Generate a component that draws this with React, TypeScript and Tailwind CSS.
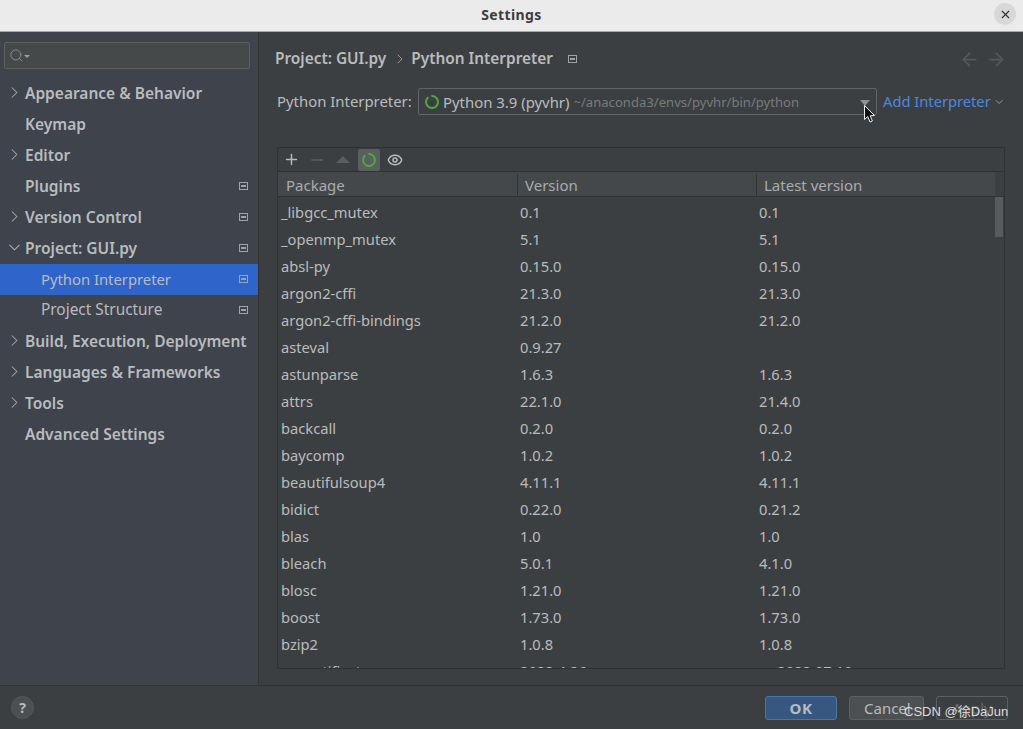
import { ChevronDown, ChevronRight, ArrowLeft, ArrowRight, Plus, Minus, Eye, X, Search } from "lucide-react";

const FONT = "font-['Noto_Sans','Open_Sans',sans-serif]";

const NAV = [
  { label: "Appearance & Behavior", arrow: "right", bold: true },
  { label: "Keymap", bold: true },
  { label: "Editor", arrow: "right", bold: true },
  { label: "Plugins", bold: true, badge: true },
  { label: "Version Control", arrow: "right", bold: true, badge: true },
  { label: "Project: GUI.py", arrow: "down", bold: true, badge: true },
  { label: "Python Interpreter", badge: true, child: true, selected: true },
  { label: "Project Structure", badge: true, child: true },
  { label: "Build, Execution, Deployment", arrow: "right", bold: true },
  { label: "Languages & Frameworks", arrow: "right", bold: true },
  { label: "Tools", arrow: "right", bold: true },
  { label: "Advanced Settings", bold: true },
];

const PACKAGES = [
  ["_libgcc_mutex", "0.1", "0.1"],
  ["_openmp_mutex", "5.1", "5.1"],
  ["absl-py", "0.15.0", "0.15.0"],
  ["argon2-cffi", "21.3.0", "21.3.0"],
  ["argon2-cffi-bindings", "21.2.0", "21.2.0"],
  ["asteval", "0.9.27", ""],
  ["astunparse", "1.6.3", "1.6.3"],
  ["attrs", "22.1.0", "21.4.0"],
  ["backcall", "0.2.0", "0.2.0"],
  ["baycomp", "1.0.2", "1.0.2"],
  ["beautifulsoup4", "4.11.1", "4.11.1"],
  ["bidict", "0.22.0", "0.21.2"],
  ["blas", "1.0", "1.0"],
  ["bleach", "5.0.1", "4.1.0"],
  ["blosc", "1.21.0", "1.21.0"],
  ["boost", "1.73.0", "1.73.0"],
  ["bzip2", "1.0.8", "1.0.8"],
  ["ca-certificates", "2022.4.26", "▲ 2022.07.19"],
];

function ProjectBadge({ className = "" }: { className?: string }) {
  return (
    <svg width="9" height="8" viewBox="0 0 9 8" className={className}>
      <rect x="0.5" y="0.5" width="8" height="7" fill="none" stroke="#9ea3a8" />
      <rect x="2" y="3" width="5" height="2" fill="#9ea3a8" />
    </svg>
  );
}

function Spinner({ size = 16 }: { size?: number }) {
  return (
    <svg width={size} height={size} viewBox="0 0 16 16">
      <circle cx="8" cy="8" r="6" fill="none" stroke="#4fa83d" strokeWidth="2" strokeDasharray="30 3" transform="rotate(-60 8 8)" />
    </svg>
  );
}

function NavRow({ item }: { item: (typeof NAV)[number] }) {
  return (
    <div className={`relative flex h-[31px] items-center pr-[10px] ${item.child ? "pl-[41px]" : "pl-[25px]"} ${item.selected ? "bg-[#2f65ca]" : ""}`}>
      {item.arrow === "right" && <ChevronRight size={19} strokeWidth={1.3} className="absolute left-[5px] top-[5px] text-[#a9adb1]" />}
      {item.arrow === "down" && <ChevronDown size={19} strokeWidth={1.3} className="absolute left-[5px] top-[5px] text-[#a9adb1]" />}
      <span className={`relative top-[-1px] whitespace-nowrap leading-[22px] text-[#b9bcbe] ${item.bold ? "text-[15.5px] font-semibold" : item.selected ? "text-[14.8px]" : "text-[15.4px]"}`}>{item.label}</span>
      {item.badge && <ProjectBadge className="relative top-[-1px] ml-auto" />}
    </div>
  );
}

export default function App() {
  return (
    <div className={`${FONT} flex h-[729px] w-[1023px] flex-col overflow-hidden bg-[#3c3f41] relative`}>
      {/* Title bar */}
      <div className="relative flex h-[32px] shrink-0 items-center justify-center border-b border-[#a8a8a8] bg-[#ebebeb]">
        <span className="mb-[3px] text-[14px] font-bold tracking-[0.4px] text-[#3d3d3d]">Settings</span>
        <div className="absolute right-[7px] top-[3px] flex h-[22px] w-[22px] items-center justify-center rounded-full bg-[#d8d8d8]">
          <X size={13} strokeWidth={2} className="text-[#2e2e2e]" />
        </div>
      </div>

      <div className="flex min-h-0 flex-1">
        {/* Sidebar */}
        <div className="flex w-[259px] shrink-0 flex-col border-r border-[#323232] bg-[#3e434c]">
          <div className="mx-[4px] mt-[10px] flex h-[27px] w-[246px] items-center rounded-[2px] border border-[#5e6060] bg-[#45494a] pl-[4px]">
            <Search size={15} strokeWidth={1.2} className="text-[#9a9da0]" />
            <span className="mt-[2px] h-0 w-0 border-x-[3px] border-t-[3px] border-x-transparent border-t-[#9a9da0]" />
          </div>
          <div className="mt-[9px] flex flex-col">
            {NAV.map((item) => (
              <NavRow key={item.label} item={item} />
            ))}
          </div>
        </div>

        {/* Main panel */}
        <div className="flex min-w-0 flex-1 flex-col pl-[16px] pr-[18px]">
          <div className="mt-[16px] flex h-[22px] items-center">
            <span className="whitespace-nowrap text-[15.4px] font-semibold text-[#b9bcbe]">Project: GUI.py</span>
            <ChevronRight size={16} strokeWidth={1.2} className="ml-[6px] text-[#a9adb1]" />
            <span className="ml-[3px] whitespace-nowrap text-[15.4px] font-semibold text-[#b9bcbe]">Python Interpreter</span>
            <ProjectBadge className="ml-[15px]" />
            <div className="ml-auto mr-[-2px] flex items-center gap-[6px] text-[#55585a]">
              <ArrowLeft size={21} strokeWidth={2} />
              <ArrowRight size={21} strokeWidth={2} />
            </div>
          </div>

          <div className="mt-[18px] flex h-[27px] items-center pl-[2px]">
            <span className="w-[141px] shrink-0 whitespace-nowrap text-[14.9px] text-[#b9bcbe]">Python Interpreter:</span>
            <div className="relative flex h-[27px] w-[459px] shrink-0 items-center rounded-[2px] border border-[#646464] pl-[5px] pt-[1px]">
              <Spinner size={16} />
              <span className="ml-[3px] whitespace-nowrap text-[14.9px] text-[#b9bcbe]">Python 3.9 (pyvhr)</span>
              <span className="relative top-[1px] ml-[4px] whitespace-nowrap text-[13.1px] text-[#787b7d]">~/anaconda3/envs/pyvhr/bin/python</span>
              <span className="absolute right-[6px] top-[11px] h-0 w-0 border-x-[5px] border-t-[6px] border-x-transparent border-t-[#8f9294]" />
            </div>
            <span className="ml-[6px] whitespace-nowrap text-[14.7px] text-[#4a88e0]">Add Interpreter</span>
            <ChevronDown size={16} strokeWidth={1.6} className="ml-[2px] text-[#a9adb1]" />
          </div>

          {/* Package table */}
          <div className="mb-[16px] ml-[2px] mt-[32px] flex min-h-0 w-[728px] flex-1 flex-col overflow-hidden border border-[#2f3133]">
            <div className="flex h-[24px] shrink-0 items-center border-b border-[#323232] pl-[5px]">
              <div className="flex h-[22px] w-[16px] items-center justify-center">
                <Plus size={17} strokeWidth={2} className="shrink-0 text-[#b9bcbe]" />
              </div>
              <div className="ml-[10px] flex h-[22px] w-[16px] items-center justify-center">
                <Minus size={18} strokeWidth={2} className="shrink-0 text-[#5b5e60]" />
              </div>
              <span className="ml-[11px] h-0 w-0 border-x-[7px] border-b-[7px] border-x-transparent border-b-[#5b5e60]" />
              <div className="ml-[8px] flex h-[22px] w-[22px] items-center justify-center rounded-[2px] bg-[#5a5f60]">
                <Spinner size={16} />
              </div>
              <Eye size={16} strokeWidth={2.2} className="ml-[7px] text-[#b9bcbe]" />
            </div>
            <div className="flex h-[25px] shrink-0 border-b border-[#323232] pr-[9px]">
              <div className="flex w-full bg-[#45484a] pt-[2px] text-[15px] text-[#a9acae]">
                <div className="flex w-[240px] items-center border-r border-[#323232] pl-[8px]">Package</div>
                <div className="flex w-[239px] items-center border-r border-[#323232] pl-[7px]">Version</div>
                <div className="flex flex-1 items-center pl-[7px]">Latest version</div>
              </div>
            </div>
            <div className="relative min-h-0 flex-1 overflow-hidden pt-[1px]">
              {PACKAGES.map(([name, version, latest]) => (
                <div key={name} className="grid h-[27px] grid-cols-[239px_239px_1fr] items-center text-[14.7px] leading-[20px] text-[#b9bcbe]">
                  <span className="pl-[3px]">{name}</span>
                  <span className="pl-[3px]">{version}</span>
                  <span className="pl-[3px]">{latest}</span>
                </div>
              ))}
              <div className="absolute right-[1px] top-0 h-[40px] w-[8px] bg-[#585b5d]" />
            </div>
          </div>
        </div>
      </div>

      {/* Footer */}
      <div className="flex h-[44px] shrink-0 items-center border-t border-[#323232] pl-[11px] pr-[15px]">
        <div className="flex h-[23px] w-[23px] items-center justify-center rounded-full border border-[#55585a] bg-[#4c5052] text-[14px] font-bold text-[#b9bcbe]">?</div>
        <div className="ml-auto flex items-center text-[15px]">
          <button className="flex h-[24px] w-[72px] items-center justify-center rounded-[3px] border border-[#4a74a4] bg-[#365880] pt-[2px] font-bold tracking-[0.6px] text-[#b9bcbe]">OK</button>
          <button className="ml-[12px] flex h-[24px] w-[75px] items-center justify-start rounded-[3px] border border-[#5e6060] bg-[#4c5052] pl-[14px] pt-[2px] text-[#b9bcbe]">Cancel</button>
          <button className="ml-[12px] flex h-[24px] w-[72px] items-center justify-center rounded-[3px] border border-[#5e6060] pt-[2px] text-[#6b6e70]">Apply</button>
        </div>
      </div>

      {/* Mouse cursor over the combo box */}
      <svg width="13" height="20" viewBox="0 0 13 20" className="absolute left-[864px] top-[105px]">
        <path d="M0.5 0.5 L0.5 14.5 L3.7 11.5 L6 17 L8.4 16 L6.2 10.8 L10.5 10.5 Z" fill="#111" stroke="#eee" strokeWidth="1" />
      </svg>

      {/* Watermark */}
      <span className="absolute left-[904px] top-[702px] whitespace-nowrap font-['Liberation_Sans','Noto_Sans_CJK_SC',sans-serif] text-[13px] leading-[20px] text-[#dcdcdc]">CSDN @徐DaJun</span>
    </div>
  );
}
